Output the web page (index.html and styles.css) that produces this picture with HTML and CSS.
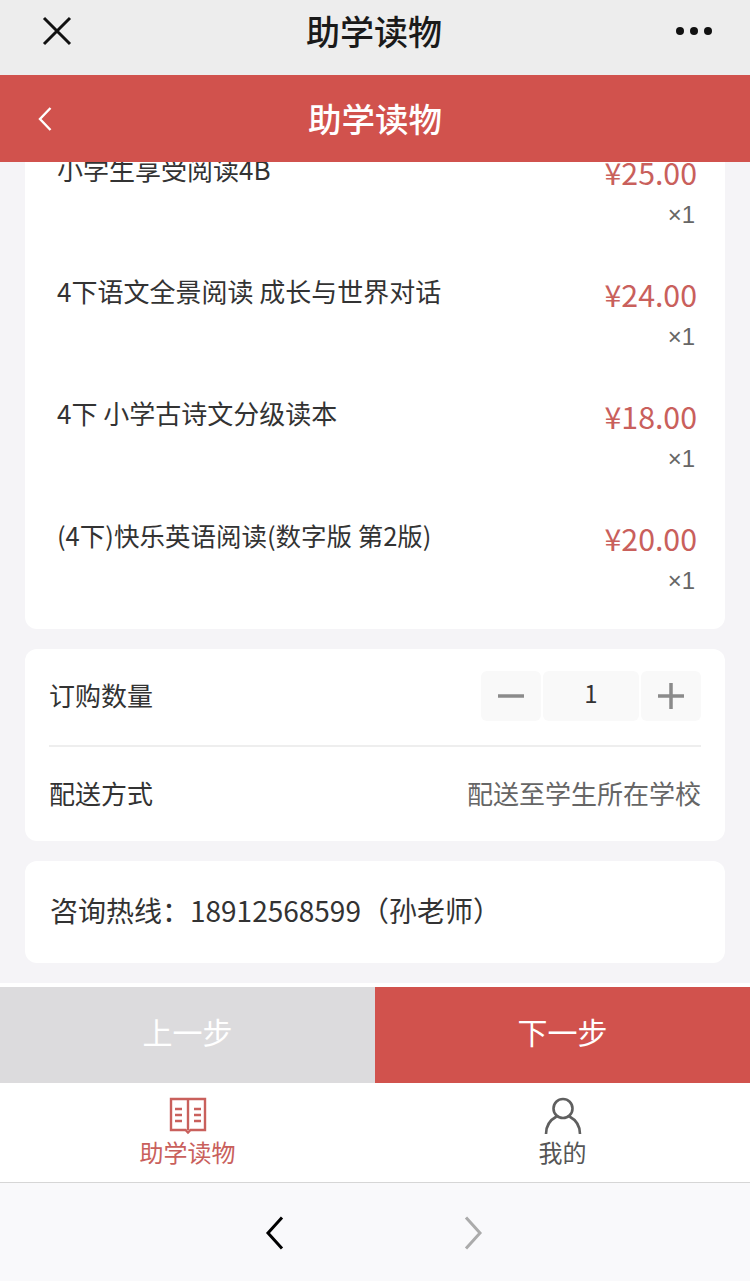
FILE: index.html
```html
<!DOCTYPE html>
<html lang="zh-CN">
<head>
    <meta charset="UTF-8">
    <meta name="viewport" content="width=device-width, initial-scale=1.0">
    <title>助学读物</title>
    <link rel="stylesheet" href="styles.css">
</head>
<body>
    <div class="app">
        <div class="wx-bar">
            <svg class="wx-close" width="30" height="30" viewBox="0 0 30 30"><path d="M2 2L28 28M28 2L2 28" fill="none" stroke="#111" stroke-width="3"/></svg>
            <div class="wx-title">助学读物</div>
            <div class="wx-more"><span></span><span></span><span></span></div>
        </div>
        <div class="header">
            <svg class="header-back" width="16" height="26" viewBox="0 0 16 26"><path d="M13.5 2L3 13L13.5 24" fill="none" stroke="#fff" stroke-width="2.4"/></svg>
            <div class="header-title">助学读物</div>
        </div>
        <div class="content">
            <div class="card list">
                <div class="item">
                    <div class="item-name">小学生享受阅读4B</div>
                    <div class="item-side"><div class="price">¥25.00</div><div class="qty">×1</div></div>
                </div>
                <div class="item">
                    <div class="item-name">4下语文全景阅读 成长与世界对话</div>
                    <div class="item-side"><div class="price">¥24.00</div><div class="qty">×1</div></div>
                </div>
                <div class="item">
                    <div class="item-name">4下 小学古诗文分级读本</div>
                    <div class="item-side"><div class="price">¥18.00</div><div class="qty">×1</div></div>
                </div>
                <div class="item">
                    <div class="item-name item-name-tight">(4下)快乐英语阅读(数字版 第2版)</div>
                    <div class="item-side"><div class="price">¥20.00</div><div class="qty">×1</div></div>
                </div>
            </div>
            <div class="card order">
                <div class="order-row order-row-line">
                    <div class="order-label">订购数量</div>
                    <div class="stepper">
                        <div class="step-btn"><svg width="26" height="26" viewBox="0 0 26 26"><path d="M0 13H26" stroke="#8b8b8b" stroke-width="3.5"/></svg></div>
                        <div class="step-num">1</div>
                        <div class="step-btn"><svg width="26" height="26" viewBox="0 0 26 26"><path d="M0 13H26M13 0V26" stroke="#8b8b8b" stroke-width="3.5"/></svg></div>
                    </div>
                </div>
                <div class="order-row">
                    <div class="order-label">配送方式</div>
                    <div class="order-label order-value">配送至学生所在学校</div>
                </div>
            </div>
            <div class="card hotline">咨询热线：18912568599（孙老师）</div>
        </div>
        <div class="actions">
            <div class="btn btn-prev">上一步</div>
            <div class="btn btn-next">下一步</div>
        </div>
        <div class="tabs">
            <div class="tab tab-active">
                <svg width="38" height="38" viewBox="0 0 38 38" fill="none" stroke="#c9605c" stroke-width="2.4">
                    <path d="M2 2H36V33H21.500L19 35.500L16.500 33H2Z"/>
                    <path d="M19 2V33"/>
                    <path d="M6 12H13M6 18H13M6 24H13M25 12H32M25 18H32M25 24H32"/>
                </svg>
                <div>助学读物</div>
            </div>
            <div class="tab">
                <svg width="38" height="38" viewBox="0 0 38 38" fill="none" stroke="#5f5f5f" stroke-width="2.6">
                    <circle cx="19" cy="11.500" r="9.500"/>
                    <path d="M2 37C2 28 6 23 12.500 19.500M36 37C36 28 32 23 25.500 19.500"/>
                </svg>
                <div>我的</div>
            </div>
        </div>
        <div class="wx-nav">
            <svg width="20" height="34" viewBox="0 0 20 34"><path d="M17 1.500L3 17L17 32.500" fill="none" stroke="#000" stroke-width="3"/></svg>
            <svg width="20" height="34" viewBox="0 0 20 34"><path d="M3 1.500L17 17L3 32.500" fill="none" stroke="#ababab" stroke-width="3"/></svg>
        </div>
    </div>
</body>
</html>
```

FILE: styles.css
```css
* {
    box-sizing: border-box;
}

body {
    margin: 0;
    font-family: "Noto Sans CJK SC", "Noto Sans", sans-serif;
    color: #333;
    background-color: #f5f4f7;
}

.app {
    width: 750px;
    height: 1281px;
    display: flex;
    flex-direction: column;
    overflow: hidden;
}

.wx-bar {
    height: 75px;
    padding: 0 38px 14px 42px;
    display: flex;
    align-items: center;
    justify-content: space-between;
    background: #ededed;
}

.wx-title {
    font-size: 34px;
    font-weight: 500;
    line-height: 60px;
    color: #1a1a1a;
}

.wx-close {
    display: block;
}

.wx-more {
    width: 36px;
    display: flex;
    justify-content: space-between;
}

.wx-more span {
    width: 8px;
    height: 8px;
    border-radius: 50%;
    background: #111;
}

.header {
    position: relative;
    height: 87px;
    padding-bottom: 2px;
    display: flex;
    align-items: center;
    justify-content: center;
    background: #d1524d;
    color: #fff;
    z-index: 1;
}

.header-back {
    position: absolute;
    left: 37px;
    top: 31px;
}

.header-title {
    font-size: 33.500px;
    font-weight: 500;
}

.content {
    height: 821px;
    padding: 0 25px;
    overflow: hidden;
}

.card {
    background: #fff;
    border-radius: 12px;
    margin-bottom: 20px;
}

.list {
    margin-top: -44px;
    padding: 0 28px 0 32px;
    height: 511px;
}

.item {
    height: 122px;
    padding-top: 32px;
    display: flex;
    justify-content: space-between;
}

.item-name {
    font-size: 26px;
    line-height: 40px;
    color: #333;
    margin-top: -1px;
}

.item-name-tight {
    font-size: 25.500px;
}

.item-side {
    text-align: right;
}

.price {
    font-size: 30.300px;
    line-height: 45px;
    color: #c9605c;
}

.qty {
    font-family: "Liberation Sans", sans-serif;
    font-size: 24px;
    line-height: 40px;
    padding-right: 2px;
    color: #666;
}

.order {
    height: 192px;
    padding: 0 24px;
}

.order-row {
    height: 95px;
    display: flex;
    align-items: center;
    justify-content: space-between;
    font-size: 26px;
}

.order-row .order-label {
    margin-bottom: 4px;
}

.order-row-line {
    height: 98px;
    border-bottom: 2px solid #eeeeee;
}

.order-row-line .order-label {
    margin-bottom: 6px;
}

.order-value {
    color: #666;
}

.stepper {
    display: flex;
    gap: 2px;
    height: 50px;
    margin-bottom: 2px;
}

.step-btn {
    width: 60px;
    display: flex;
    align-items: center;
    justify-content: center;
    background: #f9f9f9;
    border-radius: 6px;
}

.step-num {
    width: 96px;
    text-align: center;
    font-size: 24px;
    line-height: 44px;
    background: #f9f9f9;
    border-radius: 6px;
}

.hotline {
    height: 102px;
    padding-left: 25px;
    font-size: 28px;
    line-height: 98px;
}

.actions {
    height: 100px;
    padding-top: 4px;
    display: flex;
    background: #fff;
}

.btn {
    width: 50%;
    text-align: center;
    font-size: 30px;
    line-height: 88px;
    color: #fff;
}

.btn-prev {
    background: #dcdbdd;
}

.btn-next {
    background: #d1524d;
}

.tabs {
    height: 100px;
    display: flex;
    background: #fff;
    border-bottom: 1px solid #d6d6d6;
}

.tab {
    width: 50%;
    padding-top: 14px;
    display: flex;
    flex-direction: column;
    align-items: center;
    font-size: 24px;
    line-height: 34px;
    color: #555;
}

.tab-active {
    color: #c9605c;
}

.wx-nav {
    height: 98px;
    padding-right: 2px;
    padding-top: 2px;
    display: flex;
    align-items: center;
    justify-content: center;
    gap: 178px;
    background: #f9f9fb;
}
```
